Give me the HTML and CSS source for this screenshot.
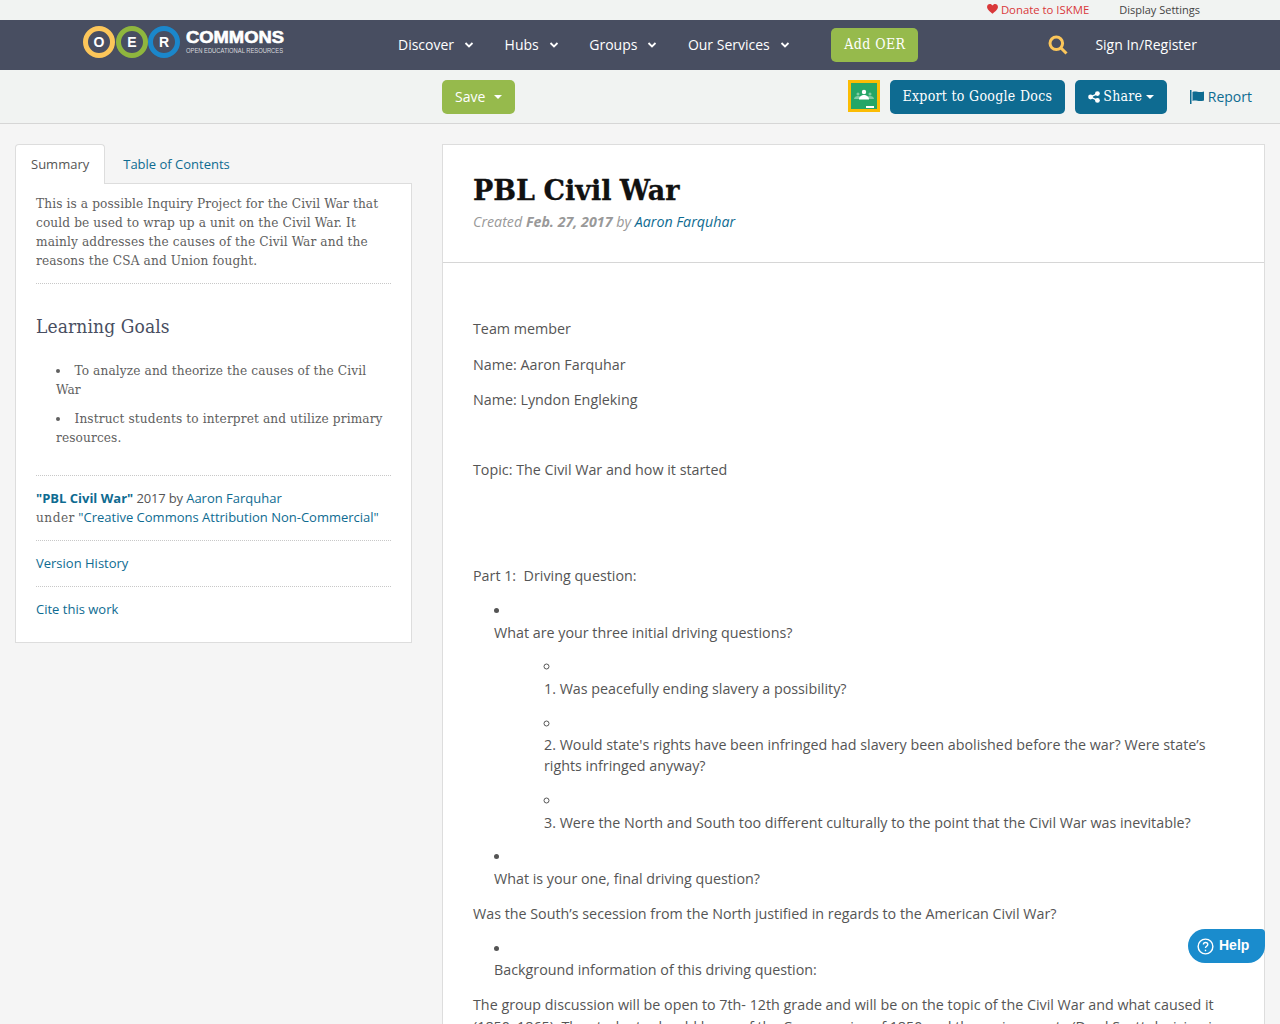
FILE: index.html
```html
<!DOCTYPE html>
<html>

<head>
  <meta charset="utf-8">
  <title>PBL Civil War</title>
  <link rel="stylesheet" href="styles.css">
</head>

<body>
  <div class="top-bar">
    <a class="donate">
      <svg class="heart" viewBox="0 0 24 22"><path d="M12 21.5C9 18.5 0 12.5 0 6.5 0 2.8 2.8 0 6.2 0 8.6 0 10.8 1.3 12 3.4 13.2 1.3 15.4 0 17.8 0 21.2 0 24 2.8 24 6.5c0 6-9 12-12 15z"/></svg>
      Donate to ISKME
    </a>
    <a class="display-settings">Display Settings</a>
  </div>

  <nav class="nav">
    <svg class="logo" viewBox="0 0 204 36" width="204" height="36">
      <circle cx="17" cy="18" r="13.500" fill="none" stroke="#fcc65a" stroke-width="5"/>
      <circle cx="50" cy="18" r="13.500" fill="none" stroke="#8fb63e" stroke-width="5"/>
      <circle cx="82" cy="18" r="13.500" fill="none" stroke="#1b87cb" stroke-width="5"/>
      <text x="17" y="23" class="logo-letter" text-anchor="middle">O</text>
      <text x="50" y="23" class="logo-letter" text-anchor="middle">E</text>
      <text x="82" y="23" class="logo-letter" text-anchor="middle">R</text>
      <text x="104" y="19" class="logo-name" textLength="98" lengthAdjust="spacingAndGlyphs">COMMONS</text>
      <text x="104" y="29" class="logo-sub" textLength="97" lengthAdjust="spacingAndGlyphs">OPEN EDUCATIONAL RESOURCES</text>
    </svg>

    <ul class="nav-links">
      <li class="nav-link">Discover <svg class="chevron" viewBox="0 0 10 8"><path d="M1.5 2l3.5 3.5L8.500 2"/></svg></li>
      <li class="nav-link">Hubs <svg class="chevron" viewBox="0 0 10 8"><path d="M1.5 2l3.5 3.5L8.500 2"/></svg></li>
      <li class="nav-link">Groups <svg class="chevron" viewBox="0 0 10 8"><path d="M1.5 2l3.5 3.5L8.500 2"/></svg></li>
      <li class="nav-link">Our Services <svg class="chevron" viewBox="0 0 10 8"><path d="M1.5 2l3.5 3.5L8.500 2"/></svg></li>
    </ul>

    <a class="btn btn-green add-oer">Add OER</a>

    <svg class="search" viewBox="0 0 20 20"><circle cx="8.300" cy="8.300" r="6.300"/><path d="M13 13l5.500 5.500"/></svg>
    <a class="sign-in">Sign In/Register</a>
  </nav>

  <div class="action-bar">
    <a class="btn btn-green save">Save <span class="caret save-caret"></span></a>

    <div class="action-right">
      <svg class="classroom" viewBox="0 0 32 32" width="32" height="32">
        <rect width="32" height="32" fill="#fbbc04"/>
        <rect x="3" y="3" width="26" height="26" fill="#25a667"/>
        <circle cx="10" cy="14" r="1.500" fill="#7fcba3"/>
        <circle cx="22" cy="14" r="1.500" fill="#7fcba3"/>
        <path d="M6 19c0-2 2-3 4-3s4 1 4 3zM18 19c0-2 2-3 4-3s4 1 4 3z" fill="#7fcba3"/>
        <circle cx="16" cy="12" r="2.200" fill="#fff"/>
        <path d="M11 19.500c0-3 2.500-4.500 5-4.500s5 1.500 5 4.500z" fill="#fff"/>
        <rect x="18" y="26" width="8" height="2" fill="#fff"/>
      </svg>
      <a class="btn btn-blue export">Export to Google Docs</a>
      <a class="btn btn-blue share">
        <svg class="share-icon" viewBox="0 0 14 14"><circle cx="11" cy="3" r="2.800"/><circle cx="3" cy="7" r="2.800"/><circle cx="11" cy="11" r="2.800"/><path d="M11 3L3 7l8 4" fill="none" stroke="#fff" stroke-width="1.600"/></svg>Share <span class="caret"></span>
      </a>
      <a class="report">
        <svg class="flag" viewBox="0 0 14 14"><path d="M0 0h1.500v14H0z"/><path d="M2.500 2c3-1.500 6 1 11.500-.5v9c-5.500 1.500-8.500-1-11.500.5z"/></svg>
        Report
      </a>
    </div>
  </div>

  <div class="page">
    <aside class="sidebar">
      <ul class="tabs">
        <li class="tab tab-active">Summary</li>
        <li class="tab">Table of Contents</li>
      </ul>
      <div class="tab-panel">
        <p class="summary">This is a possible Inquiry Project for the Civil War that could be used to wrap up a unit on the Civil War. It mainly addresses the causes of the Civil War and the reasons the CSA and Union fought.</p>
        <div class="goals">
          <h3>Learning Goals</h3>
          <ul>
            <li>To analyze and theorize the causes of the Civil War</li>
            <li>Instruct students to interpret and utilize primary resources.</li>
          </ul>
        </div>
        <div class="panel-row license">
          <a><b>"PBL Civil War"</b></a> <span class="license-year">2017 by</span> <a>Aaron Farquhar</a><br>
          <span class="license-under">under</span> <a>"Creative Commons Attribution Non-Commercial"</a>
        </div>
        <div class="panel-row"><a>Version History</a></div>
        <div class="panel-row"><a>Cite this work</a></div>
      </div>
    </aside>

    <main class="card">
      <header class="card-head">
        <h1>PBL Civil War</h1>
        <div class="byline">Created <b>Feb. 27, 2017</b> by <a>Aaron Farquhar</a></div>
      </header>
      <div class="content">
        <p>Team member</p>
        <p>Name: Aaron Farquhar</p>
        <p>Name: Lyndon Engleking</p>
        <p>&nbsp;</p>
        <p>Topic: The Civil War and how it started</p>
        <p>&nbsp;</p>
        <p>&nbsp;</p>
        <p>Part 1:&nbsp; Driving question:</p>
        <ul>
          <li>
            <p>What are your three initial driving questions?</p>
            <ul>
              <li><p>1. Was peacefully ending slavery a possibility?</p></li>
              <li><p>2. Would state's rights have been infringed had slavery been abolished before the war? Were state’s rights infringed anyway?</p></li>
              <li><p>3. Were the North and South too different culturally to the point that the Civil War was inevitable?</p></li>
            </ul>
          </li>
          <li><p>What is your one, final driving question?</p></li>
        </ul>
        <p>Was the South’s secession from the North justified in regards to the American Civil War?</p>
        <ul>
          <li><p>Background information of this driving question:</p></li>
        </ul>
        <p>The group discussion will be open to 7th- 12th grade and will be on the topic of the Civil War and what caused it (1850–1865). The students should know of the Compromise of 1850 and the major events (Dred Scott decision in</p>
      </div>
    </main>
  </div>

  <a class="help">
    <svg class="help-icon" viewBox="0 0 18 18"><circle cx="9" cy="9" r="7.800"/><path d="M6.800 7c0-3 4.600-3 4.600 0 0 1.800-2.400 1.700-2.400 3.600"/><path d="M9 12.400v1.600"/></svg>
    Help
  </a>
</body>

</html>
```

FILE: styles.css
```css
* {
  box-sizing: border-box;
}

html,
body {
  margin: 0;
  height: 1024px;
  overflow: hidden;
}

body {
  background: #f5f5f5;
  color: #555555;
  font-family: "Open Sans", sans-serif;
  font-size: 14.3px;
  line-height: 21.45px;
}

a {
  color: #0e6b91;
}

p {
  margin: 0 0 13.8px;
}

.top-bar {
  height: 20px;
  background: #f1f3f2;
  display: flex;
  justify-content: flex-end;
  align-items: center;
  gap: 30px;
  padding-right: 80px;
  font-size: 11px;
  line-height: 20px;
}

.donate {
  color: #d9383a;
  font-size: 11.35px;
}

.heart {
  width: 11px;
  height: 10px;
  fill: #d9383a;
}

.display-settings {
  color: #444444;
}

.nav {
  height: 50px;
  background: #484e61;
  display: flex;
  align-items: center;
  padding-left: 82px;
  color: #ffffff;
}

.logo {
  flex: none;
  margin-bottom: 6px;
}

.logo-letter {
  fill: #ffffff;
  font-family: "Liberation Sans", sans-serif;
  font-size: 14px;
  font-weight: 700;
}

.logo-name {
  fill: #ffffff;
  stroke: #ffffff;
  stroke-width: 0.6;
  font-family: "Liberation Sans", sans-serif;
  font-size: 17px;
  font-weight: 700;
}

.logo-sub {
  fill: #d8dade;
  font-family: "Liberation Sans", sans-serif;
  font-size: 6.5px;
}

.nav-links {
  display: flex;
  list-style: none;
  margin: 0 0 0 112px;
  padding: 0;
  gap: 30.5px;
  font-size: 14px;
}

.nav-link {
  display: flex;
  align-items: center;
  gap: 10px;
  white-space: nowrap;
}

.chevron {
  width: 10px;
  height: 8px;
  fill: none;
  stroke: #ffffff;
  stroke-width: 1.800;
}

.btn {
  display: flex;
  align-items: center;
  border-radius: 5px;
  color: #ffffff;
  white-space: nowrap;
}

.btn-green {
  background: #96ba4c;
}

.btn-blue {
  background: #0e6b91;
}

.add-oer {
  margin-left: 41.6px;
  height: 34px;
  padding: 0 13px;
  font-family: "DejaVu Serif", serif;
  font-stretch: condensed;
  font-size: 14px;
  letter-spacing: 0.4px;
}

.search {
  margin-left: 130px;
  width: 20px;
  height: 20px;
  fill: none;
  stroke: #fcc65a;
  stroke-width: 3;
}

.sign-in {
  margin-left: 27px;
  color: #ffffff;
  font-size: 14px;
}

.action-bar {
  height: 54px;
  background: #f1f3f2;
  border-bottom: 1px solid #d6d6d6;
  display: flex;
  padding: 10px 28px 0 442px;
  align-items: flex-start;
}

.action-right {
  margin-left: auto;
  display: flex;
  align-items: flex-start;
  gap: 10px;
}

.save {
  height: 34px;
  padding: 0 13px;
  gap: 9px;
  font-size: 14px;
}

.caret {
  display: inline-block;
  border-top: 4px solid #ffffff;
  border-left: 4px solid transparent;
  border-right: 4px solid transparent;
}

.export {
  height: 34px;
  padding: 0 12.5px;
  font-family: "DejaVu Serif", serif;
  font-stretch: condensed;
  font-size: 14px;
  letter-spacing: 0.3px;
}

.share {
  height: 34px;
  padding: 0 13px;
  gap: 3.5px;
  font-family: "DejaVu Serif", serif;
  font-stretch: condensed;
  font-size: 14px;
  letter-spacing: 0.25px;
}

.share-icon {
  width: 12px;
  height: 12px;
  fill: #ffffff;
}

.report {
  margin-left: 13px;
  height: 34px;
  display: flex;
  align-items: center;
  gap: 4px;
  font-size: 14px;
}

.flag {
  width: 14px;
  height: 14px;
  fill: #0e6b91;
}

.page {
  display: grid;
  grid-template-columns: 397px 823px;
  gap: 30px;
  padding: 20px 15px 0;
}

.tabs {
  display: flex;
  list-style: none;
  margin: 0;
  padding: 0;
  height: 39px;
  font-size: 13px;
  line-height: 21px;
  color: #0e6b91;
}

.tab {
  padding: 10px 15px 0;
  margin-right: 3px;
  height: 39px;
}

.tab-active {
  position: relative;
  z-index: 1;
  height: 40px;
  padding-top: 9px;
  background: #ffffff;
  color: #555555;
  border: 1px solid #dddddd;
  border-bottom: 0;
  border-radius: 4px 4px 0 0;
}

.tab-panel {
  background: #ffffff;
  border: 1px solid #dddddd;
  padding: 10px 20px 10px;
  font-size: 13px;
  line-height: 19px;
}

.summary,
.goals {
  color: #606060;
  font-family: "DejaVu Serif", serif;
  font-stretch: condensed;
  font-size: 13.5px;
  letter-spacing: 0.12px;
}

.summary {
  margin: 0;
  padding-bottom: 13px;
  border-bottom: 1px dotted #c8c8c8;
}

.goals {
  padding: 29px 0 18px;
}

.goals h3 {
  margin: 0 0 22px;
  color: #484e61;
  font-size: 19px;
  font-weight: 400;
  line-height: 26px;
}

.goals ul {
  margin: 0;
  padding: 0 0 0 20px;
  list-style-position: inside;
}

.goals li {
  margin-bottom: 10px;
}

.panel-row {
  border-top: 1px dotted #c8c8c8;
  padding: 13px 0;
}

.license-year {
  letter-spacing: -0.2px;
}

.license-under {
  color: #606060;
  font-family: "DejaVu Serif", serif;
  font-stretch: condensed;
  font-size: 13.5px;
  letter-spacing: 0.5px;
}

.card {
  background: #ffffff;
  border: 1px solid #dddddd;
}

.card-head {
  height: 118px;
  padding: 25px 30px 0;
  border-bottom: 1px solid #d6d6d6;
}

.card-head h1 {
  margin: 0;
  color: #111111;
  font-family: "DejaVu Serif", serif;
  font-size: 27px;
  font-weight: 700;
  line-height: 42px;
  word-spacing: -1px;
  -webkit-text-stroke: 0.3px #111111;
}

.byline {
  color: #999999;
  font-size: 14.25px;
  font-style: italic;
  line-height: 20px;
}

.content {
  padding: 55.4px 30px 0;
}

.content ul {
  margin: 0 0 13.5px;
  padding: 0 0 0 21px;
  list-style-position: inside;
}

.content li p {
  margin-bottom: 13.2px;
}

.content ul ul {
  padding-left: 50px;
  margin-bottom: 0;
}

.help {
  position: fixed;
  left: 1188px;
  top: 929px;
  width: 77px;
  height: 34px;
  display: flex;
  align-items: center;
  gap: 5px;
  padding-left: 9px;
  background: #1a8ccd;
  border-radius: 17px 4px 17px 17px;
  color: #ffffff;
  font-family: "Liberation Sans", sans-serif;
  font-size: 14px;
  font-weight: 700;
}

.help-icon {
  width: 17px;
  height: 17px;
  fill: none;
  stroke: #ffffff;
  stroke-width: 1.500;
}
```
